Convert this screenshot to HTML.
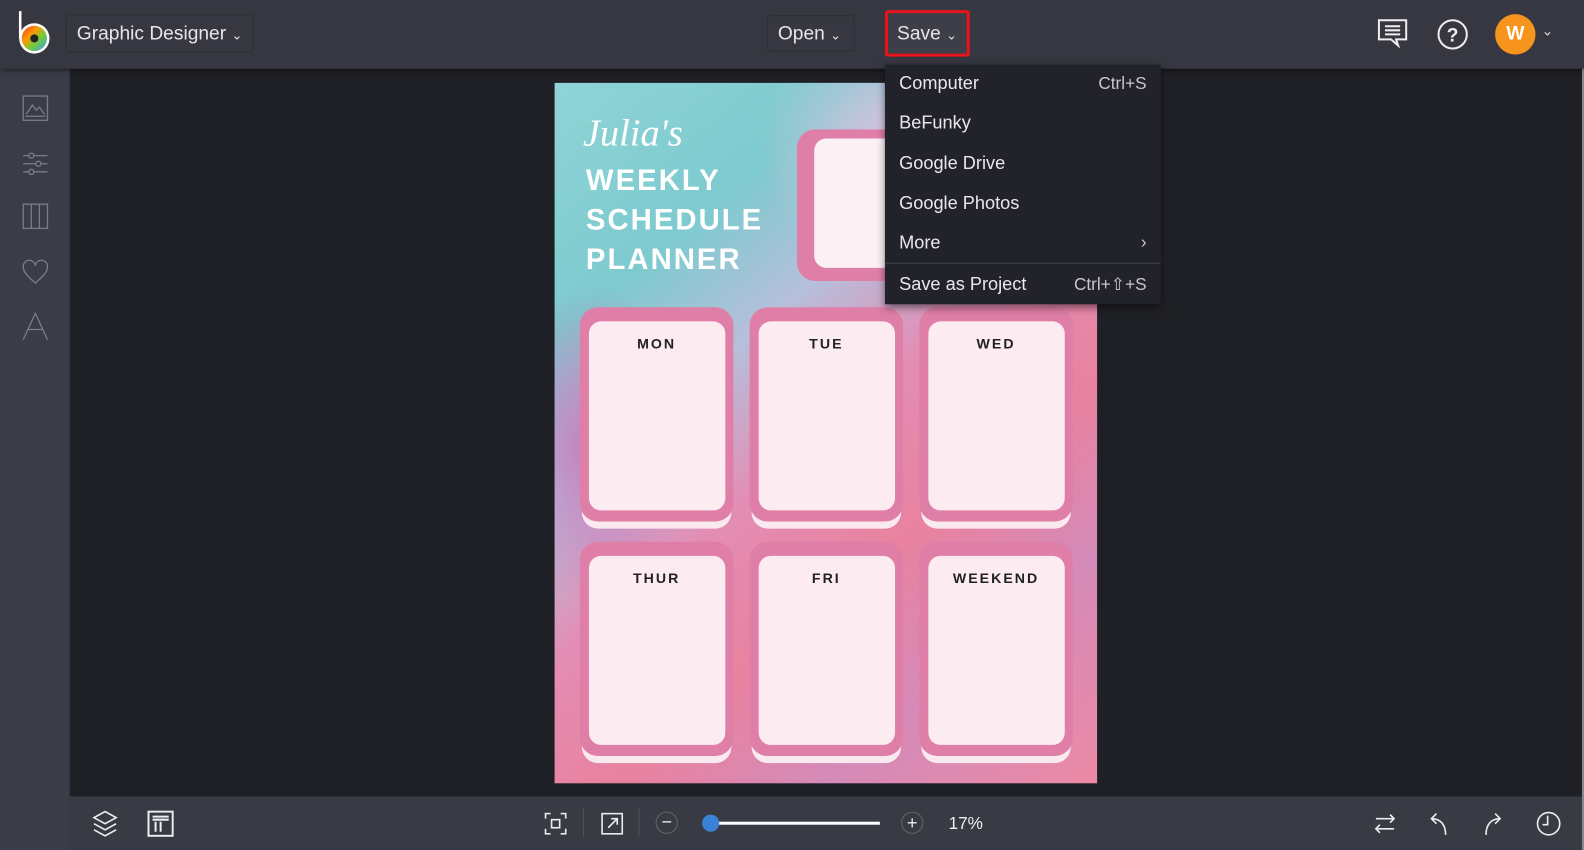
<!DOCTYPE html>
<html><head><meta charset="utf-8">
<style>
html,body{margin:0;padding:0;width:1584px;height:850px;overflow:hidden;background:#1f2025;font-family:"Liberation Sans",sans-serif}
#w{position:absolute;left:0;top:0;width:1568px;height:841px;transform:scale(1.0102,1.0107);transform-origin:0 0;background:#1f2025}
.top{position:absolute;left:0;top:0;width:1568px;height:68px;background:#363740;box-shadow:0 2px 6px rgba(0,0,0,.5);z-index:3}
.side{position:absolute;left:0;top:68px;width:69px;height:773px;background:#3a3c47}
.bot{position:absolute;left:69px;top:788px;width:1499px;height:53px;background:#383a44}
.btn{position:absolute;color:#e6e6ea;font-size:19px;border:1px solid #2d2e36;border-radius:3px;height:36px;line-height:36px;padding:0 10px;box-sizing:border-box;white-space:nowrap}
.menu{position:absolute;left:876px;top:64px;width:273px;height:237px;background:#22232a;z-index:5;box-shadow:0 3px 8px rgba(0,0,0,.5)}
.mi{position:absolute;left:14px;color:#e8e8ec;font-size:18px}
.sc{position:absolute;right:14px;color:#c8c8cc;font-size:17px}
.design{position:absolute;left:549px;top:82px;width:537px;height:693px;overflow:hidden;
background:linear-gradient(140deg,#8fd4d6 0%,#7dcacf 22%,#b6bfdb 36%,#e38db4 50%,#e9829f 65%,#d48ab8 80%,#ec8aa6 100%)}
.card{position:absolute;width:152px;height:212px;background:#df7fa7;border-radius:18px;box-shadow:0 9px 0 -2px #fbe9f0}
.card .in{position:absolute;left:9px;top:14px;width:135px;height:187px;background:#fcecf2;border-radius:12px}
.card .t{position:absolute;left:0;width:100%;top:28px;text-align:center;font-weight:bold;font-size:14px;letter-spacing:2px;color:#222}
.ti{position:absolute;left:31px;color:#fff;font-weight:bold;font-size:29px;letter-spacing:2px}
svg{position:absolute}
</style></head><body><div id="w">
<div class="top">
 <svg style="left:17px;top:10px" width="36" height="46" viewBox="0 0 36 46">
  <defs><linearGradient id="g" x1="0" y1="0" x2="1" y2="1"><stop offset="0" stop-color="#e33"/><stop offset=".35" stop-color="#f90"/><stop offset=".6" stop-color="#7c3"/><stop offset="1" stop-color="#39f"/></linearGradient></defs>
  <path d="M3 1 V28" stroke="#fff" stroke-width="2.5"/>
  <circle cx="17" cy="28" r="15" fill="#fff"/><circle cx="17" cy="28" r="12.5" fill="url(#g)"/><circle cx="17" cy="28" r="4" fill="#222"/>
 </svg>
 <div class="btn" style="left:65px;top:14px;height:38px;line-height:38px">Graphic Designer <span style="font-size:13px">&#8964;</span></div>
 <div class="btn" style="left:759px;top:15px;width:87px">Open <span style="font-size:13px">&#8964;</span></div>
 <div class="btn" style="left:876px;top:10px;width:84px;height:46px;line-height:42px;border:3px solid #e8141b;padding:0 0 0 9px;background:#3d3e48">Save <span style="font-size:13px">&#8964;</span></div>
 <svg style="left:1362px;top:17px" width="34" height="32" viewBox="0 0 34 32" fill="none" stroke="#eee" stroke-width="2"><path d="M3 3h27v19H20l2 6-7-6H3z"/><path d="M9 9h15M9 13h15M9 17h15"/></svg>
 <svg style="left:1421px;top:17px" width="34" height="34" viewBox="0 0 34 34"><circle cx="17" cy="17" r="14" fill="none" stroke="#eee" stroke-width="2"/><text x="17" y="24" text-anchor="middle" fill="#eee" font-size="19" font-weight="bold" font-family="Liberation Sans">?</text></svg>
 <div style="position:absolute;left:1480px;top:14px;width:40px;height:40px;border-radius:50%;background:#f7941d;color:#fff;font-weight:bold;font-size:19px;text-align:center;line-height:40px">W</div>
 <div style="position:absolute;left:1526px;top:22px;color:#ddd;font-size:14px">&#8964;</div>
</div>
<div class="side">
 <svg style="left:22px;top:26px" width="26" height="26" viewBox="0 0 26 26" fill="none" stroke="#7a7c88" stroke-width="1.3"><rect x="1" y="1" width="24" height="24"/><path d="M4 19l6-9 4 5 3-3 5 7M3 21h20"/></svg>
 <svg style="left:22px;top:80px" width="26" height="26" viewBox="0 0 26 26" fill="none" stroke="#7a7c88" stroke-width="1.3"><path d="M1 6h24M1 14h24M1 22h24"/><circle cx="9" cy="6" r="2.5" fill="#3a3c47"/><circle cx="16" cy="14" r="2.5" fill="#3a3c47"/><circle cx="9" cy="22" r="2.5" fill="#3a3c47"/></svg>
 <svg style="left:22px;top:133px" width="26" height="26" viewBox="0 0 26 26" fill="none" stroke="#7a7c88" stroke-width="1.3"><rect x="1" y="1" width="24" height="24"/><path d="M9 1v24M17 1v24"/></svg>
 <svg style="left:22px;top:188px" width="26" height="26" viewBox="0 0 26 26" fill="none" stroke="#7a7c88" stroke-width="1.3"><path d="M13 24C5 17 1 13 1 8a6 6 0 0 1 12-1 6 6 0 0 1 12 1c0 5-4 9-12 16z"/></svg>
 <svg style="left:22px;top:241px" width="26" height="28" viewBox="0 0 26 28" fill="none" stroke="#7a7c88" stroke-width="1.3"><path d="M1 27L13 1l12 26M6 17h14"/></svg>
</div>
<div class="design">
 <div style="position:absolute;left:-60px;top:200px;width:200px;height:320px;background:radial-gradient(ellipse,#c77dbd 0%,rgba(200,120,190,0) 70%)"></div>
 <div style="position:absolute;left:200px;top:-60px;width:300px;height:240px;background:radial-gradient(ellipse,#e0c3e0 0%,rgba(220,190,220,0) 70%)"></div>
 <div style="position:absolute;left:28px;top:28px;color:#fff;font-family:'Liberation Serif',serif;font-style:italic;font-size:38px">Julia's</div>
 <div class="ti" style="top:81px">WEEKLY</div>
 <div class="ti" style="top:120px">SCHEDULE</div>
 <div class="ti" style="top:159px">PLANNER</div>
 <div class="card" style="left:240px;top:46px;width:120px;height:150px;box-shadow:none"><div class="in" style="width:100px;height:128px;left:17px;top:9px;background:#fbf1f5"></div></div>
 <div class="card" style="left:25px;top:222px"><div class="in"></div><div class="t">MON</div></div>
 <div class="card" style="left:193px;top:222px"><div class="in"></div><div class="t">TUE</div></div>
 <div class="card" style="left:361px;top:222px"><div class="in"></div><div class="t">WED</div></div>
 <div class="card" style="left:25px;top:454px"><div class="in"></div><div class="t">THUR</div></div>
 <div class="card" style="left:193px;top:454px"><div class="in"></div><div class="t">FRI</div></div>
 <div class="card" style="left:361px;top:454px"><div class="in"></div><div class="t">WEEKEND</div></div>
</div>
<div class="menu">
 <div class="mi" style="top:8px">Computer</div><div class="sc" style="top:9px">Ctrl+S</div>
 <div class="mi" style="top:47px">BeFunky</div>
 <div class="mi" style="top:87px">Google Drive</div>
 <div class="mi" style="top:127px">Google Photos</div>
 <div class="mi" style="top:166px">More</div><div class="sc" style="top:166px">&#8250;</div>
 <div style="position:absolute;left:0;top:196px;width:273px;height:1px;background:#3f4049"></div>
 <div class="mi" style="top:207px">Save as Project</div><div class="sc" style="top:208px">Ctrl+&#8679;+S</div>
</div>
<div class="bot">
 <svg style="left:22px;top:13px" width="26" height="28" viewBox="0 0 26 28" fill="none" stroke="#eee" stroke-width="1.6"><path d="M13 2l11 6-11 6-11-6z"/><path d="M2 14l11 6 11-6M2 20l11 6 11-6"/></svg>
 <svg style="left:77px;top:14px" width="26" height="26" viewBox="0 0 26 26" fill="none" stroke="#eee" stroke-width="2"><rect x="1" y="1" width="24" height="24"/><path d="M5 6h16M8 11v10M13 11v10M5 9h16"/></svg>
 <svg style="left:470px;top:16px" width="22" height="22" viewBox="0 0 22 22" fill="none" stroke="#eee" stroke-width="1.6"><path d="M1 6V1h5M16 1h5v5M21 16v5h-5M6 21H1v-5"/><rect x="7" y="7" width="8" height="8"/></svg>
 <div style="position:absolute;left:508px;top:12px;width:1px;height:28px;background:#555"></div>
 <svg style="left:526px;top:16px" width="22" height="22" viewBox="0 0 22 22" fill="none" stroke="#eee" stroke-width="1.6"><rect x="1" y="1" width="20" height="20"/><path d="M7 15L16 6M10 6h6v6"/></svg>
 <div style="position:absolute;left:563px;top:12px;width:1px;height:28px;background:#555"></div>
 <div style="position:absolute;left:580px;top:15px;width:20px;height:20px;border:1px solid #666;border-radius:50%;color:#eee;text-align:center;line-height:19px;font-size:18px">&#8722;</div>
 <div style="position:absolute;left:630px;top:25px;width:172px;height:3px;background:#fff"></div>
 <div style="position:absolute;left:626px;top:18px;width:17px;height:17px;border-radius:50%;background:#3b82d6"></div>
 <div style="position:absolute;left:823px;top:15px;width:20px;height:20px;border:1px solid #666;border-radius:50%;color:#eee;text-align:center;line-height:20px;font-size:18px">+</div>
 <div style="position:absolute;left:870px;top:17px;color:#eee;font-size:17px">17%</div>
 <svg style="left:1290px;top:15px" width="24" height="24" viewBox="0 0 24 24" fill="none" stroke="#eee" stroke-width="1.6"><path d="M3 7h18M17 3l4 4-4 4M21 17H3M7 13l-4 4 4 4"/></svg>
 <svg style="left:1343px;top:14px" width="24" height="26" viewBox="0 0 24 26" fill="none" stroke="#eee" stroke-width="1.6"><path d="M19 24C19 14 14 8 5 8M10 3L5 8l5 5"/></svg>
 <svg style="left:1397px;top:14px" width="24" height="26" viewBox="0 0 24 26" fill="none" stroke="#eee" stroke-width="1.6"><path d="M5 24C5 14 10 8 19 8M14 3l5 5-5 5"/></svg>
 <svg style="left:1451px;top:14px" width="26" height="26" viewBox="0 0 26 26" fill="none" stroke="#eee" stroke-width="1.6"><circle cx="13" cy="13" r="11"/><path d="M12 5v9H7"/></svg>
</div>
<div style="position:absolute;left:1566px;top:0;width:2px;height:841px;background:#8a8a8a"></div>
</div></body></html>
